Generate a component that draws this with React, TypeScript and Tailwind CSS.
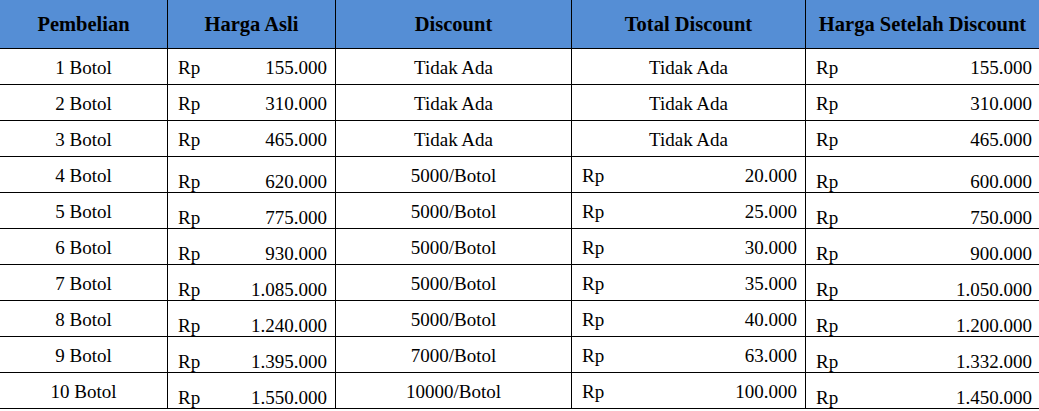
const rows = [
  { qty: '1 Botol', asli: '155.000', disc: 'Tidak Ada', total: null, after: '155.000' },
  { qty: '2 Botol', asli: '310.000', disc: 'Tidak Ada', total: null, after: '310.000' },
  { qty: '3 Botol', asli: '465.000', disc: 'Tidak Ada', total: null, after: '465.000' },
  { qty: '4 Botol', asli: '620.000', disc: '5000/Botol', total: '20.000', after: '600.000' },
  { qty: '5 Botol', asli: '775.000', disc: '5000/Botol', total: '25.000', after: '750.000' },
  { qty: '6 Botol', asli: '930.000', disc: '5000/Botol', total: '30.000', after: '900.000' },
  { qty: '7 Botol', asli: '1.085.000', disc: '5000/Botol', total: '35.000', after: '1.050.000' },
  { qty: '8 Botol', asli: '1.240.000', disc: '5000/Botol', total: '40.000', after: '1.200.000' },
  { qty: '9 Botol', asli: '1.395.000', disc: '7000/Botol', total: '63.000', after: '1.332.000' },
  { qty: '10 Botol', asli: '1.550.000', disc: '10000/Botol', total: '100.000', after: '1.450.000' },
]

const cols = 'grid grid-cols-[168px_168px_236px_234px_1fr]'

function Money({ value, low }: { value: string; low: boolean }) {
  return (
    <div
      className={`flex justify-between border-r border-black pl-[10px] pr-[8px] ${
        low ? 'items-end pb-[1px]' : 'items-center pt-[2px]'
      }`}
    >
      <span>Rp</span>
      <span>{value}</span>
    </div>
  )
}

export default function App() {
  return (
    <div className="w-[1039px] bg-white text-black text-[19px] leading-none font-['Liberation_Serif',serif]">
      <div className={`${cols} h-[49px] border-b border-black bg-[#558ed5] text-[20.5px] font-bold`}>
        <div className="flex items-center justify-center border-r border-black pt-[1px]">Pembelian</div>
        <div className="flex items-center justify-center border-r border-black pt-[1px]">Harga Asli</div>
        <div className="flex items-center justify-center border-r border-black pt-[1px]">Discount</div>
        <div className="flex items-center justify-center border-r border-black pt-[1px]">Total Discount</div>
        <div className="flex items-center justify-center pt-[1px]">Harga Setelah Discount</div>
      </div>
      {rows.map((r, i) => {
        const low = i >= 3
        return (
          <div key={r.qty} className={`${cols} h-9 border-b border-black`}>
            <div className="flex items-center justify-center border-r border-black pt-[2px]">{r.qty}</div>
            <Money value={r.asli} low={low} />
            <div className="flex items-center justify-center border-r border-black pt-[2px]">{r.disc}</div>
            {r.total ? (
              <div className="flex items-center justify-between border-r border-black pl-[10px] pr-[8px] pt-[2px]">
                <span>Rp</span>
                <span>{r.total}</span>
              </div>
            ) : (
              <div className="flex items-center justify-center border-r border-black pt-[2px]">Tidak Ada</div>
            )}
            <div
              className={`flex justify-between pl-[10px] pr-[7px] ${
                low ? 'items-end pb-[1px]' : 'items-center pt-[2px]'
              }`}
            >
              <span>Rp</span>
              <span>{r.after}</span>
            </div>
          </div>
        )
      })}
    </div>
  )
}
